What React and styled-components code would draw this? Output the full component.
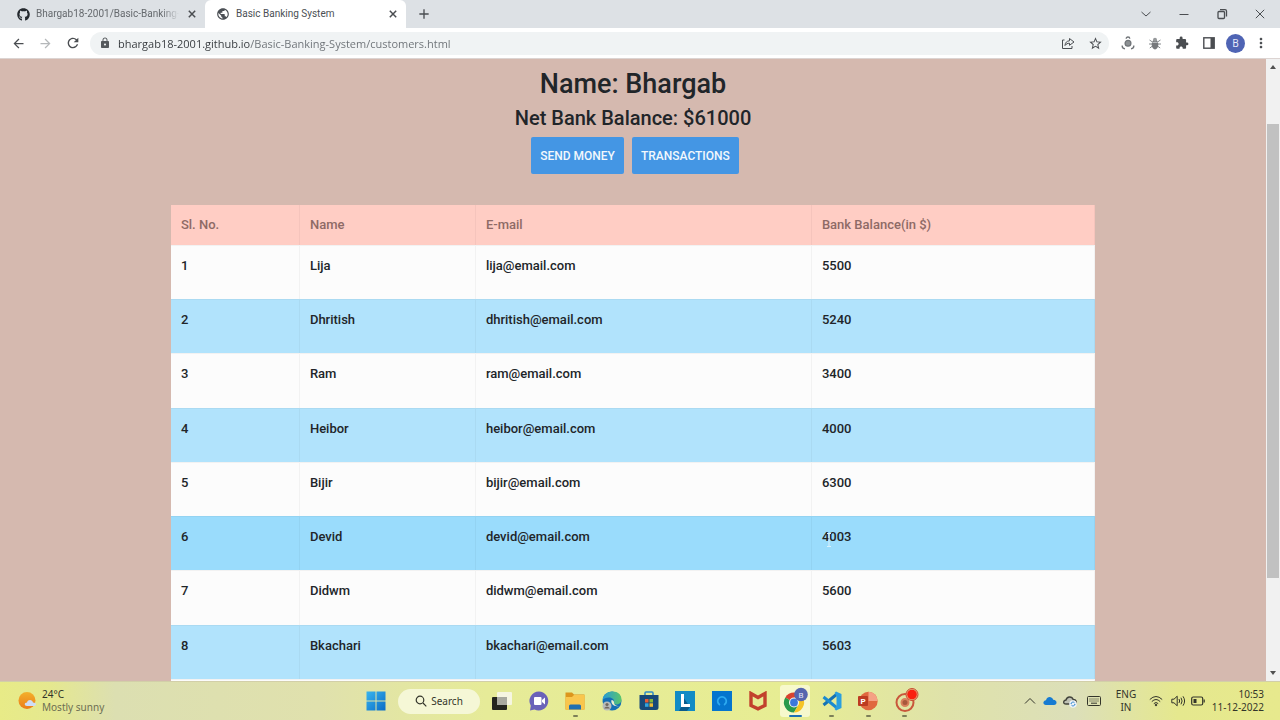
import React from 'react';
import styled, { createGlobalStyle } from 'styled-components';
import { FaGithub } from 'react-icons/fa';
import { MdLock, MdStarBorder, MdExtension, MdMoreVert, MdPublic, MdRefresh, MdArrowBack, MdArrowForward, MdAdd } from 'react-icons/md';

const GlobalStyle = createGlobalStyle`
    * {
        box-sizing: border-box;
    }

    html, body, #root {
        height: 100%;
        margin: 0;
    }

    body {
        overflow: hidden;
        font-family: 'Noto Sans', 'Open Sans', sans-serif;
    }

    button, input {
        font-family: inherit;
        border: 0;
        padding: 0;
        background: none;
    }

    svg {
        display: block;
        flex: none;
    }
`;

const Screen = styled.div`
    height: 100vh;
    display: flex;
    flex-direction: column;
`;

const TabStrip = styled.header`
    height: 28px;
    flex: none;
    display: flex;
    align-items: stretch;
    justify-content: space-between;
    background-color: #dde1e5;
`;

const TabList = styled.div`
    display: flex;
`;

const Tab = styled.div`
    width: ${props => props.$active ? '201px' : '205px'};
    padding: 0 6px 0 ${props => props.$active ? '11px' : '17px'};
    display: flex;
    align-items: center;
    gap: 6px;
    color: ${props => props.$active ? '#4b4f54' : '#65696d'};
    background-color: ${props => props.$active ? '#ffffff' : 'transparent'};
    border-radius: 6px 6px 0 0;
`;

const TabTitle = styled.span`
    flex: 1;
    min-width: 0;
    white-space: nowrap;
    font-family: Roboto, sans-serif;
    font-size: 10px;
    line-height: 16px;
    mask-image: ${props => props.$fade ? 'linear-gradient(90deg, #000 88%, transparent)' : 'none'};
`;

const IconButton = styled.button`
    width: ${props => props.$width || 27}px;
    display: flex;
    align-items: center;
    justify-content: center;
    color: ${props => props.$color || '#4a4d51'};
`;

const WindowControls = styled.div`
    display: flex;
    margin-right: 1px;
`;

const Toolbar = styled.nav`
    height: 31px;
    flex: none;
    padding: 0 7px 0 5px;
    display: flex;
    align-items: center;
    background-color: #ffffff;
    border-bottom: 1px solid #dcd4d2;
`;

const AddressBar = styled.div`
    flex: 1;
    height: 23px;
    margin: 0 5px 0 4px;
    padding: 0 4px 0 9px;
    display: flex;
    align-items: center;
    gap: 7px;
    border-radius: 12px;
    background-color: #f0f3f4;
    color: #55595d;
`;

// host is darker than the path
const AddressInput = styled.input`
    flex: 1;
    min-width: 0;
    height: 20px;
    outline: 0;
    font-family: 'Open Sans', sans-serif;
    font-size: 11px;
    background-image: linear-gradient(90deg, #34383c 132px, #6b7075 132px);
    background-clip: text;
    color: transparent;
`;

const Avatar = styled.span`
    width: 19px;
    height: 19px;
    display: flex;
    align-items: center;
    justify-content: center;
    border-radius: 50%;
    background-color: #4f64b4;
    color: #e6eafa;
    font-size: 10px;
`;

const Viewport = styled.div`
    flex: 1;
    min-height: 0;
    display: flex;
`;

const Page = styled.main`
    flex: 1;
    overflow: hidden;
    padding-top: 9px;
    background-color: #d5b9af;
    font-family: Roboto, sans-serif;
    color: #212529;
`;

const Account = styled.section`
    margin-bottom: 31px;
    display: flex;
    flex-direction: column;
    align-items: center;
    font-weight: 500;
`;

const AccountName = styled.h1`
    margin: 0 0 4px;
    font-size: 27px;
    font-weight: 500;
    line-height: 32px;
`;

const AccountBalance = styled.h2`
    margin: 0 0 5px;
    font-size: 20px;
    font-weight: 500;
    line-height: 28px;
`;

const ButtonRow = styled.div`
    display: flex;
    gap: 8px;
    padding-left: 4px;
`;

const ActionButton = styled.button`
    height: 37px;
    padding: 0 9px;
    border-radius: 2px;
    background-color: #4496e4;
    color: #f2f8fd;
    font-size: 12px;
    font-weight: 500;
`;

const CustomerTable = styled.table`
    width: 73%;
    height: 528px;
    margin: 0 auto;
    border-collapse: collapse;
    table-layout: fixed;
    font-size: 13px;
    font-weight: 500;
    text-align: left;
`;

const Col = styled.col`
    width: ${props => props.$width};
`;

const HeadCell = styled.th`
    height: 40px;
    padding: 0 10px 2px;
    font-weight: 500;
    color: #8e6a66;
    background-color: #ffcdc4;
    box-shadow: inset -1px 0 rgba(0, 0, 0, 0.04);
`;

const Row = styled.tr`
    background-color: ${props => props.$hovered ? '#9adcfc' : '#fcfcfc'};

    &:nth-child(even) {
        background-color: ${props => props.$hovered ? '#9adcfc' : '#b1e3fc'};
    }
`;

const Cell = styled.td`
    padding: 11px 10px 0;
    vertical-align: top;
    line-height: 20px;
    box-shadow: inset -1px 1px rgba(0, 0, 0, 0.04);
`;

const Scrollbar = styled.div`
    width: 14px;
    display: flex;
    flex-direction: column;
    align-items: center;
    background-color: #f1f1f1;
`;

const ScrollArrow = styled.button`
    width: 14px;
    height: 16px;
    display: flex;
    align-items: center;
    justify-content: center;
`;

const ScrollTrack = styled.div`
    flex: 1;
    padding-top: 49px;
`;

const ScrollThumb = styled.div`
    width: 12px;
    height: 84%;
    background-color: #c1c1c1;
`;

const Taskbar = styled.footer`
    height: 39px;
    flex: none;
    display: grid;
    grid-template-columns: 1fr auto 1fr;
    align-items: center;
    border-top: 1px solid #d2cfa8;
    background-image: linear-gradient(90deg, #e8eb87 0%, #e5e88f 4%, #dcdfb1 9%, #e0e1ad 25%, #e6eb98 38%, #e7ed93 62%, #dfe2aa 74%, #dcdfb9 84%, #e5e88e 92%, #e7e98d 100%);
    color: #33352a;
`;

const Weather = styled.button`
    justify-self: start;
    padding-left: 17px;
    display: flex;
    align-items: center;
    gap: 5px;
    text-align: left;
    font-size: 10px;
    line-height: 13px;
    color: #33352a;
`;

const Muted = styled.div`
    color: #6c6e52;
`;

const AppArea = styled.div`
    padding-left: 1px;
    display: flex;
    align-items: center;
    gap: 7px;
`;

const AppList = styled.div`
    width: 433px;
    display: flex;
    justify-content: space-between;
`;

const AppButton = styled.button`
    position: relative;
    width: 30px;
    height: 32px;
    display: flex;
    align-items: center;
    justify-content: center;
    border-radius: 3px;
    background-color: ${props => props.$active ? 'rgba(255, 255, 235, 0.65)' : 'transparent'};

    &::after {
        content: '';
        display: ${props => props.$running || props.$active ? 'block' : 'none'};
        position: absolute;
        bottom: 0;
        width: ${props => props.$active ? '13px' : '5px'};
        height: 2px;
        border-radius: 1px;
        background-color: ${props => props.$active ? '#1a6fb4' : '#7d8058'};
    }
`;

const SearchButton = styled.button`
    width: 82px;
    height: 25px;
    display: flex;
    align-items: center;
    justify-content: center;
    gap: 4px;
    border-radius: 13px;
    background-color: #f5f7d6;
    color: #33352a;
    font-size: 10px;
`;

const Tray = styled.div`
    justify-self: end;
    padding-right: 16px;
    display: flex;
    align-items: center;
`;

const TrayButton = styled.button`
    width: ${props => props.$width || 20}px;
    display: flex;
    align-items: center;
    justify-content: center;
    font-size: 10px;
    line-height: 13px;
    color: #33352a;
`;

const Clock = styled.button`
    width: 56px;
    text-align: right;
    white-space: nowrap;
    font-size: 10px;
    line-height: 13px;
    color: #33352a;
`;

const BeamAnchor = styled.span`
    position: relative;
`;

const Beam = styled.svg`
    position: absolute;
    left: 4px;
    top: 4px;
`;

const customers = [
    { name: 'Lija', email: 'lija@email.com', balance: 5500 },
    { name: 'Dhritish', email: 'dhritish@email.com', balance: 5240 },
    { name: 'Ram', email: 'ram@email.com', balance: 3400 },
    { name: 'Heibor', email: 'heibor@email.com', balance: 4000 },
    { name: 'Bijir', email: 'bijir@email.com', balance: 6300 },
    { name: 'Devid', email: 'devid@email.com', balance: 4003, hovered: true },
    { name: 'Didwm', email: 'didwm@email.com', balance: 5600 },
    { name: 'Bkachari', email: 'bkachari@email.com', balance: 5603 },
];

const Line = ({ size = 12, d, width = 1, children }) => (
    <svg width={size} height={size} viewBox="0 0 12 12" fill="none" stroke="currentColor" strokeWidth={width}>
        {d && <path d={d} />}
        {children}
    </svg>
);

const ShareIcon = () => (
    <svg width="14" height="14" viewBox="0 0 14 14" fill="none" stroke="currentColor" strokeLinejoin="round">
        <path d="M3.5 4H1.5V12.5H11V10" />
        <path d="M4 9.5C4.2 6.5 5.8 5 8.5 4.8V2.5L13 6L8.5 9.3V7.2C6.5 7.2 5.2 8 4 9.5Z" />
    </svg>
);

const RecorderIcon = () => (
    <svg width="14" height="14" viewBox="0 0 14 14" fill="none" stroke="#717579" strokeWidth="1.3">
        <circle cx="7" cy="7.3" r="2.9" fill="#8d9194" />
        <path d="M5.2 2.8Q5.2 1 7 1Q8.8 1 8.8 2.8M1.2 9.5Q0.8 12.2 4 12.8M12.8 9.5Q13.2 12.2 10 12.8" />
    </svg>
);

const BugIcon = () => (
    <svg width="12" height="13" viewBox="0 0 12 13" fill="none" stroke="#85898c">
        <path d="M0.5 3L3.5 5M11.5 3L8.5 5M0 7H12M0.8 11L3.5 9M11.2 11L8.5 9" />
        <ellipse cx="6" cy="7.5" rx="3.3" ry="5" fill="#76797c" stroke="none" />
        <circle cx="6" cy="2.8" r="2" fill="#96999b" stroke="none" />
        <path d="M3.3 5.5H8.7" stroke="#b6b9bb" />
    </svg>
);

const WeatherIcon = () => (
    <svg width="20" height="20" viewBox="0 0 20 20">
        <defs>
            <linearGradient id="sun" x1="0" y1="0" x2="0" y2="1">
                <stop offset="0" stopColor="#f3b02c" />
                <stop offset="1" stopColor="#ec7c18" />
            </linearGradient>
        </defs>
        <circle cx="10" cy="9.5" r="8.5" fill="url(#sun)" />
        <path d="M10 15C7 15 7 11.5 10 11.5C11 8 15.5 8.5 16 11.5C20 11.5 19.5 15 17 15Z" fill="#cfdcf5" />
    </svg>
);

const WindowsIcon = () => (
    <svg width="20" height="20" viewBox="0 0 20 20">
        <defs>
            <linearGradient id="win" x1="0" y1="0" x2="1" y2="1">
                <stop offset="0" stopColor="#39b5ee" />
                <stop offset="1" stopColor="#0a6bc6" />
            </linearGradient>
        </defs>
        <path fill="url(#win)" d="M0.5 0.5H9.5V9.5H0.5ZM10.5 0.5H19.5V9.5H10.5ZM0.5 10.5H9.5V19.5H0.5ZM10.5 10.5H19.5V19.5H10.5Z" />
    </svg>
);

const TaskViewIcon = () => (
    <svg width="20" height="20" viewBox="0 0 20 20">
        <rect y="6" width="15" height="13" rx="1" fill="#24251f" />
        <rect x="5" y="1" width="15" height="13" rx="1" fill="#f8f8ee" fillOpacity="0.85" />
        <rect x="5" y="6" width="10" height="8" fill="#a9aaa0" />
    </svg>
);

const ChatIcon = () => (
    <svg width="20" height="20" viewBox="0 0 20 20">
        <path d="M10 0.5A9.5 9.5 0 1 1 5.5 18.5L1 19.5L1.8 14.8A9.5 9.5 0 0 1 10 0.5Z" fill="#6a62b9" />
        <rect x="5" y="6" width="7.5" height="8" rx="1" fill="#fff" />
        <path d="M13 9L16 6.5V13.5L13 11Z" fill="#fff" />
    </svg>
);

const FolderIcon = () => (
    <svg width="20" height="20" viewBox="0 0 20 20">
        <path d="M0.5 1.5H7L9 3.5H19.5V18.5H0.5Z" fill="#dc961d" />
        <path d="M0.5 6H7L9 4H19.5V18.5H0.5Z" fill="#f9c64d" />
        <path d="M4 18.5V15Q4 13.5 5.5 13.5H14.5Q16 13.5 16 15V18.5Z" fill="#216fb0" />
    </svg>
);

const EdgeIcon = () => (
    <svg width="20" height="20" viewBox="0 0 20 20">
        <defs>
            <linearGradient id="edge" x1="0" y1="0" x2="1" y2="0">
                <stop offset="0" stopColor="#2699d7" />
                <stop offset="1" stopColor="#5ac66c" />
            </linearGradient>
        </defs>
        <circle cx="10" cy="10" r="9.5" fill="#146fb5" />
        <path d="M0.5 9C1 3.5 5.5 0.5 10.5 0.5C16 0.5 19.5 4 19.5 8.5C19.5 12 17 13.5 14 13.5C12 13.5 11.2 12.5 12 11C12.8 9 10.5 6.5 7 6.5C4 6.5 1.5 7.5 0.5 9Z" fill="url(#edge)" />
        <path d="M9.5 9C8.5 12.5 11.5 16 17 15C15.5 15 12 14.5 12 11.5Q12 9 9.5 9Z" fill="#e9efd0" />
        <circle cx="5" cy="15" r="4.5" fill="#b8bcba" />
        <circle cx="5" cy="13.5" r="1.6" fill="#72675f" />
        <path d="M2.2 17.5C2.8 15.2 7.2 15.2 7.8 17.5Z" fill="#72675f" />
    </svg>
);

const StoreIcon = () => (
    <svg width="20" height="20" viewBox="0 0 20 20">
        <path d="M6 5V2Q6 1 7 1H13Q14 1 14 2V5" fill="none" stroke="#2d8bc8" strokeWidth="1.5" />
        <path d="M0.5 4H19.5V16.5Q19.5 19 17 19H3Q0.5 19 0.5 16.5Z" fill="#174978" />
        <path d="M6 8H9.5V11.5H6Z" fill="#e65b33" />
        <path d="M10.5 8H14V11.5H10.5Z" fill="#86b83b" />
        <path d="M6 12.3H9.5V15.8H6Z" fill="#31a4df" />
        <path d="M10.5 12.3H14V15.8H10.5Z" fill="#efbd35" />
    </svg>
);

const LenovoIcon = () => (
    <svg width="20" height="20" viewBox="0 0 20 20">
        <rect width="20" height="20" fill="#118bc5" />
        <path d="M6 3V16L4 20H12L15 16Z" fill="#0a5b8c" />
        <path d="M7.5 3V14.5H15" fill="none" stroke="#fff" strokeWidth="3" />
    </svg>
);

const AlexaIcon = () => (
    <svg width="20" height="20" viewBox="0 0 20 20">
        <rect width="20" height="20" fill="#0575ce" />
        <path d="M8 14A4.3 4.3 0 1 1 12 14" fill="none" stroke="#2daaf0" strokeWidth="1.8" />
    </svg>
);

const McAfeeIcon = () => (
    <svg width="18" height="20" viewBox="0 0 18 20">
        <path d="M2 2.5L9 6.5L16 2.5V14.5L9 17.8L2 14.5Z" fill="none" stroke="#c2412c" strokeWidth="3.4" />
    </svg>
);

const ChromeIcon = () => (
    <svg width="26" height="28" viewBox="0 0 26 28">
        <path d="M12 15.5L3.3 10.5A10 10 0 0 1 20.7 10.5Z" fill="#d9432f" />
        <path d="M12 15.5L3.3 10.5A10 10 0 0 0 12 25.5L16.3 18Z" fill="#299a4c" />
        <path d="M12 10.5H20.7A10 10 0 0 1 12 25.5L16.3 18Z" fill="#f6c425" />
        <circle cx="12" cy="15.5" r="5" fill="#fafaf0" />
        <circle cx="12" cy="15.5" r="3.9" fill="#3b78dc" />
        <circle cx="19" cy="7.5" r="6.8" fill="#5665ae" />
        <text x="19" y="10.5" textAnchor="middle" fontFamily="Roboto, sans-serif" fontSize="8" fill="#e3e6f7">B</text>
    </svg>
);

const CodeIcon = () => (
    <svg width="20" height="20" viewBox="0 0 20 20">
        <path d="M14.5 3.5L1.5 14" stroke="#1573b4" strokeWidth="3" />
        <path d="M1.5 6L14.5 16.5" stroke="#1b8bd0" strokeWidth="3" />
        <path d="M14 0.5L19.5 3V17L14 19.5L12.5 18L14.5 15V5L12.5 2Z" fill="#2a9fdf" />
    </svg>
);

const PowerPointIcon = () => (
    <svg width="20" height="20" viewBox="0 0 20 20">
        <circle cx="10.5" cy="10" r="9.2" fill="#e0683f" />
        <path d="M10.5 0.8A9.2 9.2 0 0 1 19.7 10H10.5Z" fill="#f5a184" />
        <rect y="5" width="10" height="10" rx="1" fill="#bd3b21" />
        <text x="5" y="13" textAnchor="middle" fontFamily="Roboto, sans-serif" fontWeight="700" fontSize="8" fill="#fff">P</text>
    </svg>
);

const CaptureIcon = () => (
    <svg width="28" height="28" viewBox="0 0 28 28">
        <circle cx="14" cy="15.5" r="8.5" fill="none" stroke="#c9573b" strokeWidth="2" />
        <circle cx="14" cy="15.5" r="3.5" fill="#a8583c" stroke="#d9805c" strokeWidth="2" />
        <circle cx="21" cy="7.5" r="6" fill="#e6ab7b" stroke="#c84c32" />
        <circle cx="21" cy="7.5" r="4.8" fill="#fa200f" />
    </svg>
);

const OneDriveIcon = () => (
    <svg width="14" height="10" viewBox="0 0 14 10">
        <path d="M3 9C-0.5 9 -0.5 4.5 3 4.2C4 0 9 0 10.2 3.8C14.5 3.8 14.5 9 11 9Z" fill="#167bd2" />
    </svg>
);

const SyncIcon = () => (
    <svg width="14" height="13" viewBox="0 0 14 13">
        <path d="M3 9C-0.2 9 0 5.2 3 5C4 1 9 1 10.2 4.5C14 4.5 14 9 11 9Z" fill="#bfc1b4" stroke="#42443b" strokeWidth="1.4" />
        <circle cx="10" cy="9" r="3.8" fill="#eef3f8" />
        <path d="M8 9A2 2 0 0 1 11.5 7.8M12 9A2 2 0 0 1 8.5 10.2" fill="none" stroke="#2782cc" />
    </svg>
);

const KeyboardIcon = () => (
    <svg width="14" height="10" viewBox="0 0 14 10" fill="none" stroke="currentColor">
        <rect x="0.5" y="0.5" width="13" height="9" rx="1" />
        <path d="M2.5 3H11.5M2.5 5H11.5" strokeDasharray="1 1" />
        <path d="M4 7.2H10" />
    </svg>
);

const WifiIcon = () => (
    <svg width="14" height="12" viewBox="0 0 14 12" fill="none" stroke="currentColor">
        <path d="M0.8 4.5Q7 -1.5 13.2 4.5M2.8 6.6Q7 2.4 11.2 6.6M4.8 8.6Q7 6.4 9.2 8.6" />
        <circle cx="7" cy="10" r="0.8" fill="currentColor" />
    </svg>
);

const SpeakerIcon = () => (
    <svg width="15" height="12" viewBox="0 0 15 12" fill="none" stroke="currentColor" strokeLinejoin="round">
        <path d="M0.8 4.2H3L6.2 1.2V10.8L3 7.8H0.8Z" />
        <path d="M8 4Q9.3 6 8 8M10 2.7Q12.2 6 10 9.3M12 1.3Q15.2 6 12 10.7" />
    </svg>
);

const BatteryIcon = () => (
    <svg width="14" height="10" viewBox="0 0 14 10" fill="none" stroke="currentColor" strokeWidth="1.2">
        <rect x="0.7" y="1" width="11" height="8" rx="1.5" />
        <path d="M13.2 3.5V6.5" />
        <rect x="2.5" y="3" width="3" height="4" fill="currentColor" stroke="none" />
    </svg>
);

const apps = [
    { label: 'Task view', icon: <TaskViewIcon /> },
    { label: 'Chat', icon: <ChatIcon /> },
    { label: 'File Explorer', icon: <FolderIcon />, running: true },
    { label: 'Edge', icon: <EdgeIcon /> },
    { label: 'Store', icon: <StoreIcon /> },
    { label: 'Lenovo', icon: <LenovoIcon /> },
    { label: 'Alexa', icon: <AlexaIcon /> },
    { label: 'McAfee', icon: <McAfeeIcon /> },
    { label: 'Chrome', icon: <ChromeIcon />, active: true },
    { label: 'Code', icon: <CodeIcon />, running: true },
    { label: 'PowerPoint', icon: <PowerPointIcon />, running: true },
    { label: 'Recorder', icon: <CaptureIcon />, running: true },
];

const CloseTab = () => (
    <IconButton $width={14} aria-label="Close tab">
        <Line width={1.5} d="M2.8 2.8L9.2 9.2M9.2 2.8L2.8 9.2" />
    </IconButton>
);

const BrowserTabs = () => (
    <TabStrip>
        <TabList>
            <Tab>
                <FaGithub size={13} color="#24292e" />
                <TabTitle $fade>Bhargab18-2001/Basic-Banking-S</TabTitle>
                <CloseTab />
            </Tab>
            <Tab $active>
                <MdPublic size={14} />
                <TabTitle>Basic Banking System</TabTitle>
                <CloseTab />
            </Tab>
            <IconButton $width={36} aria-label="New tab"><MdAdd size={16} /></IconButton>
        </TabList>
        <WindowControls>
            <IconButton $width={38} aria-label="Search tabs"><Line d="M1.5 4L6 8L10.5 4" /></IconButton>
            <IconButton $width={38} aria-label="Minimize"><Line d="M1.5 6.5H10.5" /></IconButton>
            <IconButton $width={38} aria-label="Restore">
                <Line width={1.3}>
                    <rect x="2" y="3.5" width="6.5" height="7" rx="1" />
                    <path d="M4 1.7H9Q10.5 1.7 10.5 3V8.5" />
                </Line>
            </IconButton>
            <IconButton $width={38} aria-label="Close"><Line d="M1.8 1.8L10.2 10.2M10.2 1.8L1.8 10.2" /></IconButton>
        </WindowControls>
    </TabStrip>
);

const BrowserToolbar = () => (
    <Toolbar>
        <IconButton aria-label="Back"><MdArrowBack size={15} /></IconButton>
        <IconButton aria-label="Forward" $color="#b5b8ba"><MdArrowForward size={15} /></IconButton>
        <IconButton aria-label="Reload"><MdRefresh size={16} /></IconButton>
        <AddressBar>
            <MdLock size={12} />
            <AddressInput
                aria-label="Address"
                defaultValue="bhargab18-2001.github.io/Basic-Banking-System/customers.html"
            />
            <IconButton $width={20} aria-label="Share"><ShareIcon /></IconButton>
            <IconButton $width={20} aria-label="Bookmark"><MdStarBorder size={15} /></IconButton>
        </AddressBar>
        <IconButton aria-label="Screen recorder"><RecorderIcon /></IconButton>
        <IconButton aria-label="Debugger"><BugIcon /></IconButton>
        <IconButton aria-label="Extensions"><MdExtension size={14} /></IconButton>
        <IconButton aria-label="Side panel">
            <Line width={1.4}>
                <rect x="0.8" y="0.8" width="10.4" height="10.4" />
                <rect x="7.5" y="1" width="3.5" height="10" fill="currentColor" stroke="none" />
            </Line>
        </IconButton>
        <IconButton aria-label="Profile"><Avatar>B</Avatar></IconButton>
        <IconButton $width={24} aria-label="Menu"><MdMoreVert size={16} /></IconButton>
    </Toolbar>
);

const Customers = () => (
    <CustomerTable>
        <colgroup>
            <Col $width="129px" />
            <Col $width="176px" />
            <Col $width="336px" />
            <Col />
        </colgroup>
        <thead>
            <tr>
                <HeadCell>Sl. No.</HeadCell>
                <HeadCell>Name</HeadCell>
                <HeadCell>E-mail</HeadCell>
                <HeadCell>Bank Balance(in $)</HeadCell>
            </tr>
        </thead>
        <tbody>
            {customers.map((item, i) => (
                <Row key={item.email} $hovered={item.hovered}>
                    <Cell>{i + 1}</Cell>
                    <Cell>{item.name}</Cell>
                    <Cell>{item.email}</Cell>
                    <Cell>
                        {item.hovered && (
                            <BeamAnchor>
                                <Beam width="6" height="14" fill="none" stroke="#d9f2fd">
                                    <path d="M1 0.5H5M3 1V13M1 13.5H5" />
                                </Beam>
                            </BeamAnchor>
                        )}
                        {item.balance}
                    </Cell>
                </Row>
            ))}
            <Row>
                <Cell colSpan={4}>&nbsp;</Cell>
            </Row>
        </tbody>
    </CustomerTable>
);

export default class App extends React.Component {
    render() {
        return (
            <Screen>
                <GlobalStyle />
                <BrowserTabs />
                <BrowserToolbar />
                <Viewport>
                    <Page>
                        <Account>
                            <AccountName>Name: Bhargab</AccountName>
                            <AccountBalance>Net Bank Balance: $61000</AccountBalance>
                            <ButtonRow>
                                <ActionButton>SEND MONEY</ActionButton>
                                <ActionButton>TRANSACTIONS</ActionButton>
                            </ButtonRow>
                        </Account>
                        <Customers />
                    </Page>
                    <Scrollbar>
                        <ScrollArrow aria-label="Scroll up">
                            <svg width="6" height="4"><path d="M0 4L3 0L6 4Z" fill="#505050" /></svg>
                        </ScrollArrow>
                        <ScrollTrack>
                            <ScrollThumb />
                        </ScrollTrack>
                        <ScrollArrow aria-label="Scroll down">
                            <svg width="6" height="4"><path d="M0 0L3 4L6 0Z" fill="#505050" /></svg>
                        </ScrollArrow>
                    </Scrollbar>
                </Viewport>
                <Taskbar>
                    <Weather>
                        <WeatherIcon />
                        <div>
                            24°C
                            <Muted>Mostly sunny</Muted>
                        </div>
                    </Weather>
                    <AppArea>
                        <AppButton aria-label="Start"><WindowsIcon /></AppButton>
                        <SearchButton>
                            <Line width={1.2}>
                                <circle cx="5" cy="5" r="3.8" />
                                <path d="M8 8L11.3 11.3" />
                            </Line>
                            Search
                        </SearchButton>
                        <AppList>
                            {apps.map(app => (
                                <AppButton key={app.label} aria-label={app.label} $active={app.active} $running={app.running}>
                                    {app.icon}
                                </AppButton>
                            ))}
                        </AppList>
                    </AppArea>
                    <Tray>
                        <TrayButton aria-label="Hidden icons"><Line d="M1 8.5L6 3.5L11 8.5" /></TrayButton>
                        <TrayButton aria-label="OneDrive"><OneDriveIcon /></TrayButton>
                        <TrayButton aria-label="Sync"><SyncIcon /></TrayButton>
                        <TrayButton $width={28} aria-label="Keyboard"><KeyboardIcon /></TrayButton>
                        <TrayButton $width={36}>ENG<br />IN</TrayButton>
                        <TrayButton $width={24} aria-label="Network"><WifiIcon /></TrayButton>
                        <TrayButton aria-label="Volume"><SpeakerIcon /></TrayButton>
                        <TrayButton aria-label="Battery"><BatteryIcon /></TrayButton>
                        <Clock>10:53<br />11-12-2022</Clock>
                    </Tray>
                </Taskbar>
            </Screen>
        );
    }
}
